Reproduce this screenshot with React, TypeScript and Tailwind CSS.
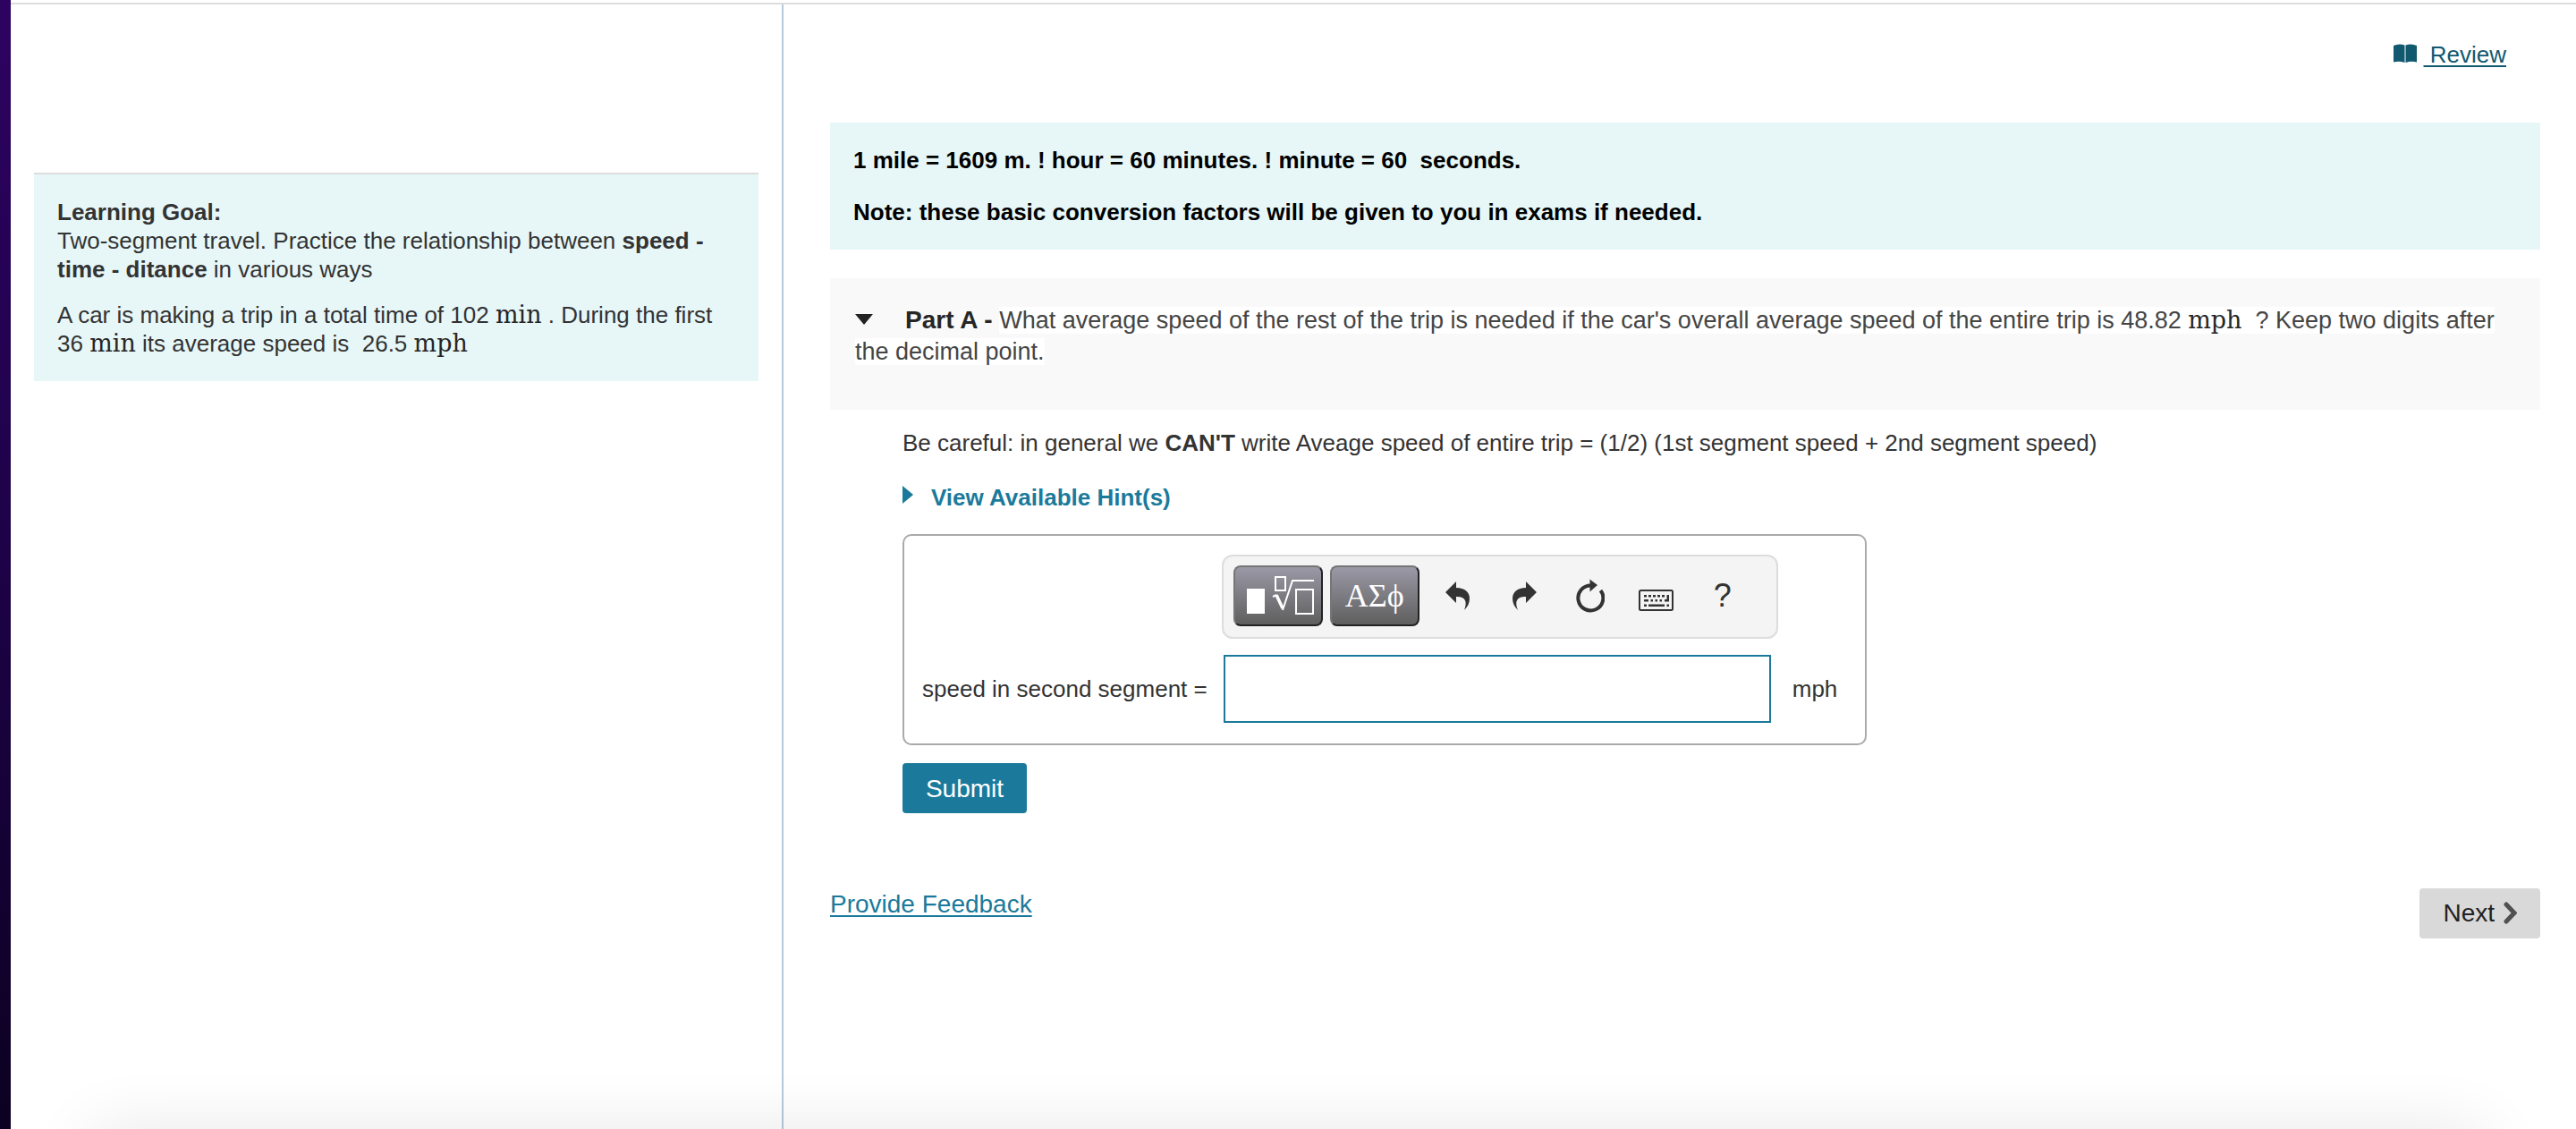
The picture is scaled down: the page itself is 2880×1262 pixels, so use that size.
import React from "react";

function Unit({ children }: { children: React.ReactNode }) {
  return (
    <span className="font-['DejaVu_Serif',serif] text-[27px] leading-none text-[#262626]">{children}</span>
  );
}

function BookIcon() {
  return (
    <svg width="26" height="22" viewBox="0 0 26 22" fill="currentColor" aria-hidden="true">
      <path d="M0 2Q6 -0.8 12.500 1.500V21Q6 18.8 0 20.6Z" />
      <path d="M13.500 1.500Q20 -0.8 26 2V20.6Q20 18.8 13.500 21Z" />
    </svg>
  );
}

function TemplateIcon() {
  return (
    <svg width="96" height="64" viewBox="0 0 96 64" fill="none" stroke="#fff" strokeWidth="2" aria-hidden="true">
      <rect x="13" y="24" width="20" height="28" fill="#fff" stroke="none" />
      <rect x="45" y="11" width="11" height="15" strokeWidth="2" />
      <path d="M42 33l4-2" strokeWidth="2" />
      <path d="M46 31l7 15" strokeWidth="3.500" />
      <path d="M53 48L64 15H88" />
      <rect x="68" y="25" width="19" height="27" />
    </svg>
  );
}

function UndoIcon() {
  return (
    <svg width="28" height="32" viewBox="0 0 28 32" fill="currentColor" aria-hidden="true">
      <path d="M0 12L12 0V7C22 7 27 12 27 19C27 24 25 28 21 32C25 22 22 16.500 12 17V24Z" />
    </svg>
  );
}

function RedoIcon() {
  return (
    <svg width="28" height="32" viewBox="0 0 28 32" fill="currentColor" aria-hidden="true">
      <path d="M28 12L16 0V7C6 7 1 12 1 19C1 24 3 28 7 32C3 22 6 16.500 16 17V24Z" />
    </svg>
  );
}

function ResetIcon() {
  return (
    <svg width="32" height="38" viewBox="0 0 32 38" fill="none" aria-hidden="true">
      <path d="M17 7.500A14 14 0 1 0 27.500 13" stroke="currentColor" strokeWidth="4" />
      <path d="M15.500 0.500L24 7L15.500 14.500Z" fill="currentColor" />
    </svg>
  );
}

function KeyboardIcon() {
  return (
    <svg width="40" height="24" viewBox="0 0 40 24" fill="currentColor" aria-hidden="true">
      <rect x="1" y="1" width="37" height="22" rx="1.500" fill="none" stroke="currentColor" strokeWidth="2" />
      <path d="M6 6h3v2.500H6zM11 6h3v2.500h-3zM16 6h3v2.500h-3zM21 6h3v2.500h-3zM26 6h3v2.500h-3zM31.500 6H34v7.500h-5V11h2.500zM6 11h5v2.500H6zM13.500 11H16v2.500h-2.500zM18.500 11H21v2.500h-2.500zM23.500 11H26v2.500h-2.500zM6 16.500h3V19H6zM11 16.500h18V19H11zM31.500 16.500H34V19h-2.500z" />
    </svg>
  );
}

const darkButton =
  "flex h-[68px] w-[100px] items-center justify-center rounded-lg border-2 border-t-[#767676] border-l-[#767676] border-r-[#222] border-b-[#222] bg-linear-to-b from-[#9b99a6] to-[#5f5f5f]";
const iconButton = "flex h-[68px] w-[44px] items-center justify-center";

export default function App() {
  return (
    <div className="relative flex min-h-screen overflow-hidden bg-white font-['Liberation_Sans',Arial,sans-serif] text-[26px] leading-8 text-[#333]">
      <div className="w-3 shrink-0 bg-linear-to-b from-[#2d0361] via-[#1d0247] to-[#0c0122]" />
      <div className="flex flex-1 flex-col pt-[3px]">
        <div className="grid flex-1 grid-cols-[432fr_1002fr] border-t-2 border-[#ddd]">
          <aside className="border-r-2 border-[#b8c8dc] px-[26px] pt-[188px]">
            <section className="border-t-2 border-[#ddd] bg-[#e7f7f8] p-[26px]">
              <h2 className="font-bold">Learning Goal:</h2>
              <p>
                Two-segment travel. Practice the relationship between <b>speed - time - ditance</b> in various ways
              </p>
              <p className="mt-[19px]">
                A car is making a trip in a total time of 102 <Unit>min</Unit> . During the first 36 <Unit>min</Unit>{" "}
                its average speed is&nbsp; 26.5 <Unit>mph</Unit>
              </p>
            </section>
          </aside>

          <main className="pr-10 pl-[52px]">
            <nav className="flex h-[132px] justify-end pt-10 pr-[38px] text-[#10596f]">
              <a href="#review" className="flex gap-2">
                <span className="pt-1">
                  <BookIcon />
                </span>
                <span className="whitespace-pre underline decoration-2 underline-offset-3"> Review</span>
              </a>
            </nav>

            <section className="bg-[#e7f7f8] p-[26px] font-bold text-black">
              <p>1 mile = 1609 m. ! hour = 60 minutes. ! minute = 60&nbsp; seconds.</p>
              <p className="mt-[26px]">Note: these basic conversion factors will be given to you in exams if needed.</p>
            </section>

            <section className="mt-8 bg-[#f9f9f9] px-7 pt-[29px] pb-[47px] leading-[35px] text-[#454545]">
              <button
                type="button"
                aria-label="Collapse Part A"
                aria-expanded="true"
                className="mr-9 inline-block h-5 w-5 align-baseline"
              >
                <svg width="20" height="20" viewBox="0 0 20 20" fill="#222" aria-hidden="true">
                  <path d="M0 4H20L10 16Z" />
                </svg>
              </button>
              <b className="text-[28px] text-[#262626]">Part A - </b>
              <span className="bg-white text-[27px]">
                What average speed of the rest of the trip is needed if the car's overall average speed of the entire
                trip is 48.82 <Unit>mph</Unit>&nbsp; ? Keep two digits after the decimal point.
              </span>
            </section>

            <form className="pt-[21px] pl-[81px]" onSubmit={(e) => e.preventDefault()}>
              <p>
                Be careful: in general we <b>CAN'T</b> write Aveage speed of entire trip = (1/2) (1st segment speed +
                2nd segment speed)
              </p>
              <button type="button" className="mt-[29px] flex items-center gap-5 font-bold text-[#1b7a9b]">
                <svg width="12" height="26" viewBox="0 0 12 26" fill="currentColor" aria-hidden="true">
                  <path d="M0 0L12 10L0 20Z" />
                </svg>
                View Available Hint(s)
              </button>

              <div className="mt-[25px] w-fit rounded-[10px] border-2 border-[#aaa] pt-[21px] pr-[31px] pb-[23px] pl-5">
                <div className="grid grid-cols-[auto_auto_auto] items-center">
                  <div
                    role="toolbar"
                    aria-label="Math tools"
                    className="col-span-2 col-start-2 flex h-[94px] w-[622px] items-start rounded-xl border-2 border-[#ddd] bg-[#f4f4f4] pt-[10px] pl-[11px] text-[#333]"
                  >
                    <button type="button" aria-label="Templates" className={darkButton}>
                      <TemplateIcon />
                    </button>
                    <button
                      type="button"
                      aria-label="Symbols"
                      className={darkButton + " ml-2 font-['Liberation_Serif',serif] text-4xl text-white"}
                    >
                      ΑΣϕ
                    </button>
                    <div className="ml-[21px] flex gap-[30px]">
                      <button type="button" aria-label="Undo" className={iconButton}>
                        <UndoIcon />
                      </button>
                      <button type="button" aria-label="Redo" className={iconButton}>
                        <RedoIcon />
                      </button>
                      <button type="button" aria-label="Reset" className={iconButton}>
                        <ResetIcon />
                      </button>
                      <button type="button" aria-label="Keyboard shortcuts" className={iconButton + " pt-2.5"}>
                        <KeyboardIcon />
                      </button>
                      <button type="button" aria-label="Help" className={iconButton + " text-4xl"}>
                        ?
                      </button>
                    </div>
                  </div>
                  <label htmlFor="answer" className="mt-[18px] pr-4">
                    speed in second segment =
                  </label>
                  <input
                    id="answer"
                    type="text"
                    className="mt-[18px] ml-0.5 h-[76px] w-[612px] border-2 border-[#1b7a9b] px-3 outline-none"
                  />
                  <span className="mt-[18px] pl-6">mph</span>
                </div>
              </div>

              <button type="submit" className="mt-5 h-14 w-[139px] rounded bg-[#1b7a9b] pt-0.5 text-[28px] text-white">
                Submit
              </button>
            </form>

            <footer className="mt-[84px] flex items-start justify-between text-[28px]">
              <a href="#feedback" className="pt-0.5 text-[#1b7a9b] underline decoration-2 underline-offset-3">
                Provide Feedback
              </a>
              <button type="button" className="flex h-14 items-center gap-2.5 rounded bg-[#d9d9d9] px-[26px] text-[#222]">
                Next
                <svg width="15" height="26" viewBox="0 0 15 26" fill="none" aria-hidden="true">
                  <path d="M3 3L12 12.500L3 22" stroke="#505050" strokeWidth="5" strokeLinecap="round" />
                </svg>
              </button>
            </footer>
          </main>
        </div>
      </div>
      <div className="pointer-events-none absolute inset-x-[100px] -bottom-12 h-10 rounded-[40px] shadow-[0_0_76px_rgba(0,0,0,0.14)]" />
    </div>
  );
}
